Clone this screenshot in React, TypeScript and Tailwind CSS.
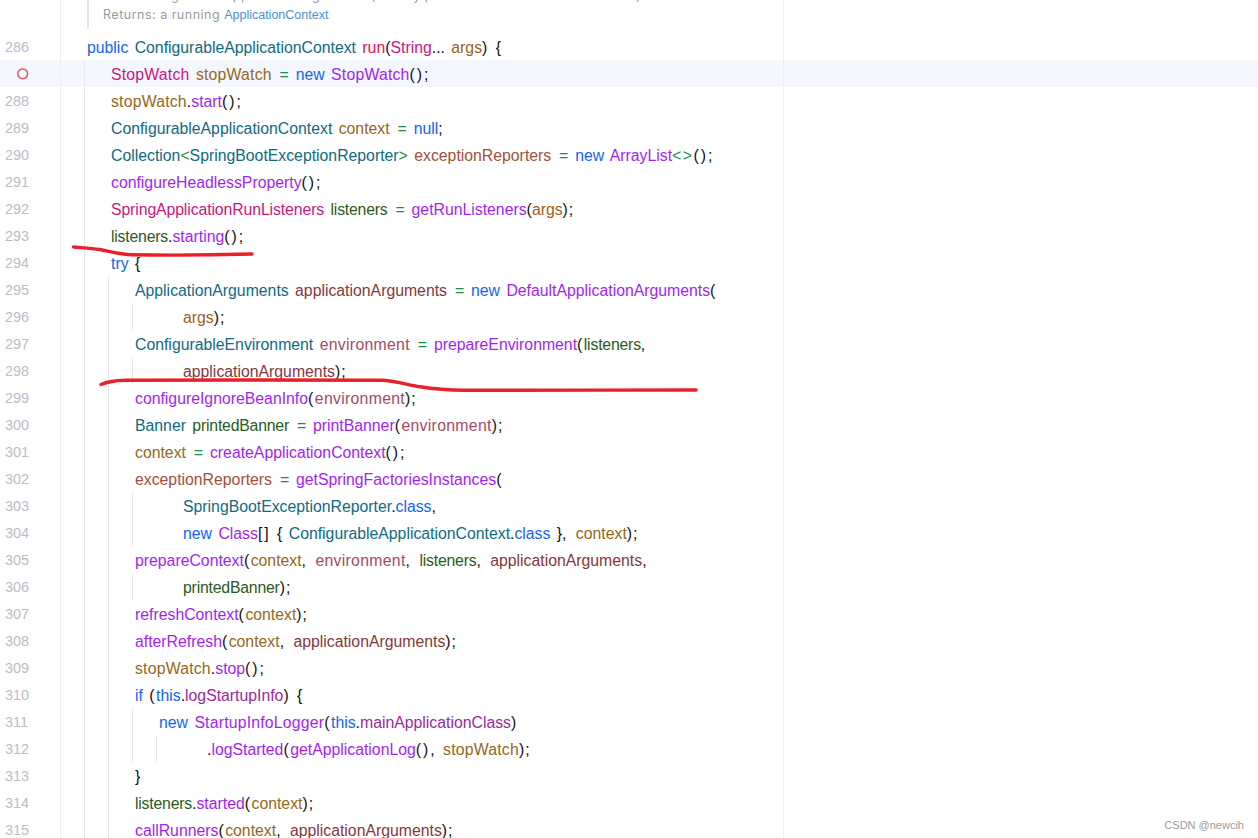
type Tok = [string, string];

const KW = "text-[#1464f0]";
const TYPE = "text-[#0f6b80]";
const FN = "text-[#a31ff0]";
const MAGENTA = "text-[#c7177f]";
const RUN = "text-[#e0125f]";
const LOCAL = "text-[#94681a]";
const ARGS = "text-[#a0601c]";
const LSN = "text-[#2c5a20] tracking-[-0.2px]";
const APP = "text-[#84383c]";
const EXC = "text-[#a0503c]";
const ENV = "text-[#a64a66] tracking-[0.3px]";
const FIELD = "text-[#9a2a9a]";
const P = "text-[#111111]";
const SW_TYPE = "text-[#c7177f] tracking-[0.2px]";
const SW_NEW = "text-[#a31ff0] tracking-[0.2px]";
const SW_VAR = "text-[#94681a] tracking-[0.2px]";
const LOGGER = "text-[#a31ff0] tracking-[0.2px]";
const RUN_LSN = "text-[#c7177f] tracking-[-0.1px]";
// punctuation sits wider apart in the editor
const OP = "text-[#1f8a4c]";
const EQ = "text-[#1f8a4c] ml-[1.5px] mr-[0.5px]";
const CALL = "text-[#111111] tracking-[2px]";
const OPEN = "text-[#111111] tracking-[1.5px]";
const CLOSE = "text-[#111111] tracking-[1px]";
const COMMA = "text-[#111111] tracking-[1.5px]";
const DIAMOND = "text-[#1f8a4c] tracking-[1.5px]";

interface Line {
  no: number;
  guides: number;
  spacer?: boolean;
  toks: Tok[];
  bp?: boolean;
}

const lines: Line[] = [
  { no: 286, guides: 0, toks: [["public", KW], [" ", P], ["ConfigurableApplicationContext", TYPE], [" ", P], ["run", RUN], ["(", P], ["String", MAGENTA], ["...", P], [" ", P], ["args", ARGS], [") {", CLOSE]] },
  { no: 287, guides: 1, bp: true, toks: [["StopWatch", SW_TYPE], [" ", P], ["stopWatch", SW_VAR], [" ", P], ["=", EQ], [" ", P], ["new", KW], [" ", P], ["StopWatch", SW_NEW], ["();", CALL]] },
  { no: 288, guides: 1, toks: [["stopWatch", SW_VAR], [".", P], ["start", FN], ["();", CALL]] },
  { no: 289, guides: 1, toks: [["ConfigurableApplicationContext", TYPE], [" ", P], ["context", LOCAL], [" ", P], ["=", EQ], [" ", P], ["null", KW], [";", P]] },
  { no: 290, guides: 1, toks: [["Collection", TYPE], ["<", OP], ["SpringBootExceptionReporter", TYPE], [">", OP], [" ", P], ["exceptionReporters", EXC], [" ", P], ["=", EQ], [" ", P], ["new", KW], [" ", P], ["ArrayList", FN], ["<>", DIAMOND], ["();", CALL]] },
  { no: 291, guides: 1, toks: [["configureHeadlessProperty", FN], ["();", CALL]] },
  { no: 292, guides: 1, toks: [["SpringApplicationRunListeners", RUN_LSN], [" ", P], ["listeners", LSN], [" ", P], ["=", EQ], [" ", P], ["getRunListeners", FN], ["(", P], ["args", ARGS], [");", CLOSE]] },
  { no: 293, guides: 1, toks: [["listeners", LSN], [".", P], ["starting", FN], ["();", CALL]] },
  { no: 294, guides: 1, toks: [["try", KW], [" {", P]] },
  { no: 295, guides: 2, toks: [["ApplicationArguments", TYPE], [" ", P], ["applicationArguments", APP], [" ", P], ["=", EQ], [" ", P], ["new", KW], [" ", P], ["DefaultApplicationArguments", FN], ["(", P]] },
  { no: 296, guides: 3, spacer: true, toks: [["args", ARGS], [");", CLOSE]] },
  { no: 297, guides: 2, toks: [["ConfigurableEnvironment", TYPE], [" ", P], ["environment", ENV], [" ", P], ["=", EQ], [" ", P], ["prepareEnvironment", FN], ["(", OPEN], ["listeners", LSN], [",", P]] },
  { no: 298, guides: 3, spacer: true, toks: [["applicationArguments", APP], [");", CLOSE]] },
  { no: 299, guides: 2, toks: [["configureIgnoreBeanInfo", FN], ["(", OPEN], ["environment", ENV], [");", CLOSE]] },
  { no: 300, guides: 2, toks: [["Banner", TYPE], [" ", P], ["printedBanner", LSN], [" ", P], ["=", EQ], [" ", P], ["printBanner", FN], ["(", OPEN], ["environment", ENV], [");", CLOSE]] },
  { no: 301, guides: 2, toks: [["context", LOCAL], [" ", P], ["=", EQ], [" ", P], ["createApplicationContext", FN], ["();", CALL]] },
  { no: 302, guides: 2, toks: [["exceptionReporters", EXC], [" ", P], ["=", EQ], [" ", P], ["getSpringFactoriesInstances", FN], ["(", P]] },
  { no: 303, guides: 3, spacer: true, toks: [["SpringBootExceptionReporter", TYPE], [".", P], ["class", KW], [",", P]] },
  { no: 304, guides: 3, spacer: true, toks: [["new", KW], [" ", P], ["Class", FN], ["[]", CALL], [" { ", P], ["ConfigurableApplicationContext", TYPE], [".", P], ["class", KW], [" }", P], [", ", COMMA], ["context", LOCAL], [");", CLOSE]] },
  { no: 305, guides: 2, toks: [["prepareContext", FN], ["(", OPEN], ["context", LOCAL], [", ", COMMA], ["environment", ENV], [", ", COMMA], ["listeners", LSN], [", ", COMMA], ["applicationArguments", APP], [",", P]] },
  { no: 306, guides: 3, spacer: true, toks: [["printedBanner", LSN], [");", CLOSE]] },
  { no: 307, guides: 2, toks: [["refreshContext", FN], ["(", OPEN], ["context", LOCAL], [");", CLOSE]] },
  { no: 308, guides: 2, toks: [["afterRefresh", FN], ["(", OPEN], ["context", LOCAL], [", ", COMMA], ["applicationArguments", APP], [");", CLOSE]] },
  { no: 309, guides: 2, toks: [["stopWatch", SW_VAR], [".", P], ["stop", FN], ["();", CALL]] },
  { no: 310, guides: 2, toks: [["if", KW], [" ", P], ["(", OPEN], ["this", KW], [".", P], ["logStartupInfo", FIELD], [") {", CLOSE]] },
  { no: 311, guides: 3, toks: [["new", KW], [" ", P], ["StartupInfoLogger", LOGGER], ["(", OPEN], ["this", KW], [".", P], ["mainApplicationClass", FIELD], [")", P]] },
  { no: 312, guides: 4, spacer: true, toks: [[".", P], ["logStarted", FN], ["(", OPEN], ["getApplicationLog", FN], ["(),", CALL], [" ", P], ["stopWatch", SW_VAR], [");", CLOSE]] },
  { no: 313, guides: 2, toks: [["}", P]] },
  { no: 314, guides: 2, toks: [["listeners", LSN], [".", P], ["started", FN], ["(", OPEN], ["context", LOCAL], [");", CLOSE]] },
  { no: 315, guides: 2, toks: [["callRunners", FN], ["(", OPEN], ["context", LOCAL], [", ", COMMA], ["applicationArguments", APP], [");", CLOSE]] },
];

function CodeRow({ line }: { line: Line }) {
  return (
    <div className={`flex h-[27px] shrink-0 items-center ${line.bp ? "bg-[#f4f8fe]" : ""}`}>
      <div className="flex h-full w-[61px] shrink-0 items-center border-r border-[#eeeeee] pl-[5px] text-[14.4px] text-[#b9bdc9]">
        {line.bp ? (
          <svg width="12" height="12" viewBox="0 0 12 12" className="ml-[12px]">
            <circle cx="5.7" cy="5.8" r="4.9" fill="none" stroke="#e8505e" strokeWidth="1.5" />
          </svg>
        ) : (
          <span className="pt-[2px]">{line.no}</span>
        )}
      </div>
      <div className="ml-[23px] flex h-full w-[700px] shrink-0 items-center border-r border-[#eeeeee]">
        {Array.from({ length: line.guides }).map((_, i) => (
          <div key={i} className="h-full w-[24px] shrink-0 border-l border-[#e6e8ee]" />
        ))}
        {line.spacer && <div className="w-[24px] shrink-0" />}
        <div className="whitespace-pre pl-[3px] pt-[2px] [word-spacing:2px]">
          {line.toks.map((t, i) => (
            <span key={i} className={t[1]}>
              {t[0]}
            </span>
          ))}
        </div>
      </div>
    </div>
  );
}

export default function App() {
  return (
    <div className="relative flex h-[838px] w-[1258px] flex-col overflow-hidden bg-white font-['Liberation_Sans',sans-serif] text-[15.8px] leading-[27px]">
      <div className="flex h-[33px] shrink-0">
        <div className="h-full w-[61px] shrink-0 border-r border-[#eeeeee]" />
        <div className="ml-[23px] h-full w-[700px] shrink-0 border-r border-[#eeeeee] pl-[3px]">
          <div className="flex h-[29px] flex-col justify-end overflow-hidden border-l-2 border-[#e4e4e4] pb-[4px] pl-[14px] font-['Inter',sans-serif] text-[12.5px] leading-[19px] tracking-[0.5px] text-[#9a9a9a]">
            <div className="whitespace-pre">Params: args – the application arguments (usually passed from a Java main method)</div>
            <div className="whitespace-pre">
              Returns: a running <span className="font-['Liberation_Sans',sans-serif] text-[12.5px] tracking-normal text-[#4f8fd0]">ApplicationContext</span>
            </div>
          </div>
        </div>
      </div>
      {lines.map((l) => (
        <CodeRow key={l.no} line={l} />
      ))}
      <svg className="absolute left-0 top-0" width="1258" height="838" fill="none">
        <path d="M73.5 247 C85 248 92 248.5 100 249.5 C112 252 120 254.5 132 254.8 C170 255.4 215 255 252 254" stroke="#e8202a" strokeWidth="3.4" strokeLinecap="round" />
        <path d="M101 384.5 C108 381.5 115 380.5 125 380.3 C200 379.8 320 379.8 383 380.3 C398 381.5 408 385 420 386.7 C435 389 450 390 465 390.2 C540 390.4 620 390 696 390" stroke="#e8202a" strokeWidth="3.4" strokeLinecap="round" />
      </svg>
      <div className="absolute bottom-[6px] right-[14px] text-[11px] leading-[14px] text-[#9b9b9b]">
        CSDN @newcih
      </div>
    </div>
  );
}
